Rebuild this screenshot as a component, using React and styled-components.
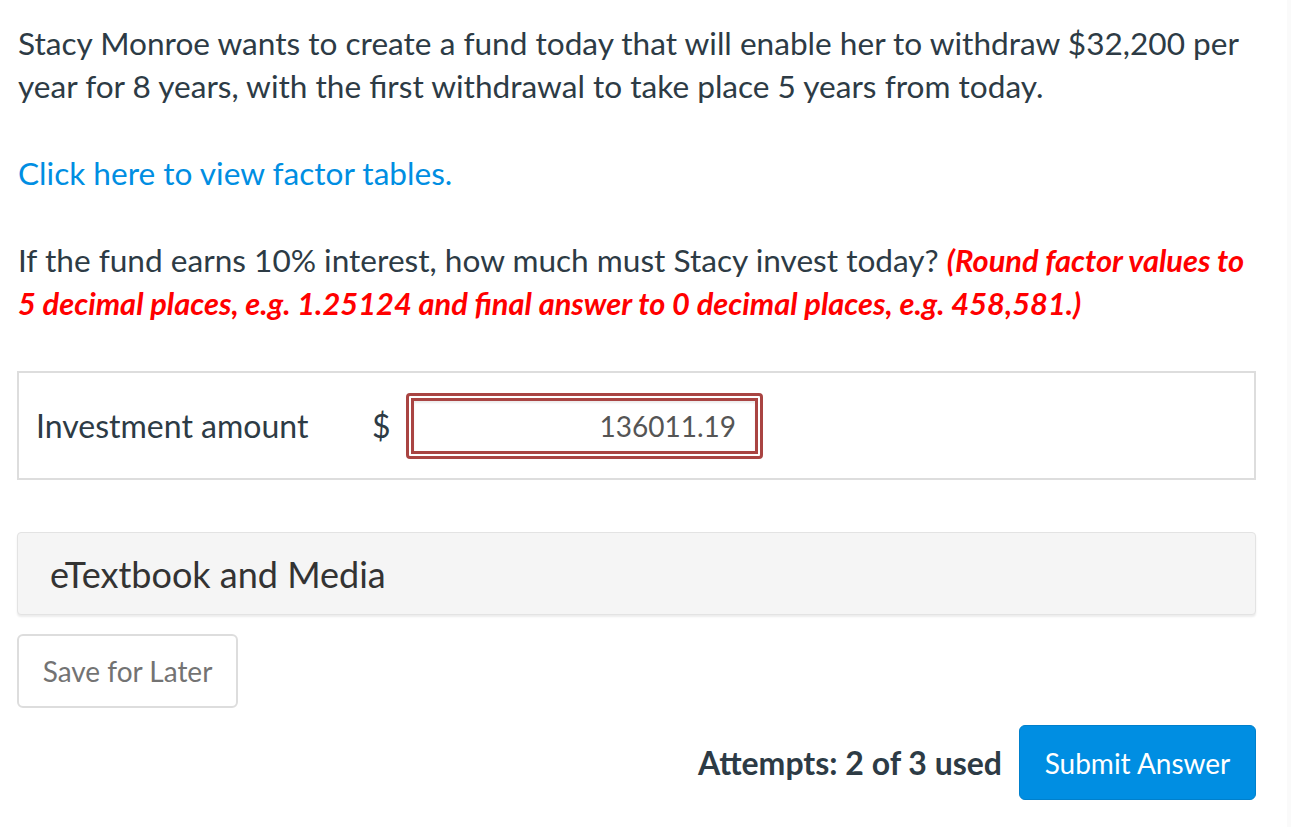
import React from "react";
import styled, { createGlobalStyle } from "styled-components";

const Global = createGlobalStyle`
  html, body { margin: 0; padding: 0; background: #fafafa; }
  body { font-family: Lato, "Open Sans", sans-serif; color: #2d3b45; }
`;

const Page = styled.div`
  width: 1287px;
  min-height: 827px;
  background: #ffffff;
  box-sizing: border-box;
  padding: 22px 31px 20px 17px;
`;

const Para = styled.p`
  margin: 0 -10px ${(p) => (p.$last ? 0 : 44)}px 1px;
  font-size: 31.6px;
  line-height: 43px;
`;

const Link = styled.a`
  color: #008ee2;
  text-decoration: none;
`;

const Note = styled.span`
  color: #ff0000;
  font-weight: 700;
  font-style: italic;
  font-size: 30.8px;
`;

const AnswerBox = styled.div`
  margin-top: 46px;
  border: 2px solid #dddddd;
  height: 109px;
  box-sizing: border-box;
  display: flex;
  align-items: center;
  padding: 0 0 0 17px;
`;

const Label = styled.span`
  font-size: 32px;
  width: 336px;
`;

const Currency = styled.span`
  font-size: 32px;
  width: 34px;
`;

const Field = styled.div`
  border: 3px solid #a94442;
  border-radius: 4px;
  padding: 2px;
  width: 357px;
  height: 66px;
  box-sizing: border-box;
  display: flex;
`;

const Input = styled.div`
  flex: 1;
  border: 3px solid #a94442;
  box-shadow: inset 0 2px 2px rgba(0, 0, 0, 0.08);
  display: flex;
  align-items: center;
  justify-content: flex-end;
  padding-right: 19px;
  font-size: 28px;
  color: #555555;
`;

const Panel = styled.div`
  margin-top: 52px;
  height: 83px;
  box-sizing: border-box;
  background: #f5f5f5;
  border: 1px solid #e3e3e3;
  border-radius: 4px;
  box-shadow: 0 2px 2px rgba(0, 0, 0, 0.08);
  display: flex;
  align-items: center;
  padding-left: 32px;
  font-size: 36px;
  color: #333333;
`;

const SecondaryButton = styled.button`
  margin-top: 19px;
  width: 221px;
  height: 74px;
  background: #ffffff;
  border: 2px solid #dddddd;
  border-radius: 6px;
  font-family: Lato, sans-serif;
  font-size: 28px;
  color: #737373;
  padding: 0;
  display: block;
`;

const Footer = styled.div`
  margin-top: 17px;
  display: flex;
  align-items: center;
  justify-content: flex-end;
  gap: 17px;
`;

const Attempts = styled.span`
  font-size: 32px;
  font-weight: 700;
`;

const PrimaryButton = styled.button`
  width: 237px;
  height: 75px;
  background: #008ee2;
  border: 1px solid #0080cc;
  border-radius: 6px;
  color: #ffffff;
  font-family: Lato, sans-serif;
  font-size: 28px;
  padding: 0;
`;

export default function App() {
  return (
    <>
      <Global />
      <Page>
        <Para>
          Stacy Monroe wants to create a fund today that will enable her to withdraw $32,200 per
          year for 8 years, with the first withdrawal to take place 5 years from today.
        </Para>
        <Para>
          <Link href="#">Click here to view factor tables.</Link>
        </Para>
        <Para $last>
          If the fund earns 10% interest, how much must Stacy invest today?{" "}
          <Note>
            (Round factor values to 5 decimal places, e.g. 1.25124 and final answer to 0 decimal
            places, e.g. 458,581.)
          </Note>
        </Para>
        <AnswerBox>
          <Label>Investment amount</Label>
          <Currency>$</Currency>
          <Field>
            <Input>136011.19</Input>
          </Field>
        </AnswerBox>
        <Panel>eTextbook and Media</Panel>
        <SecondaryButton>Save for Later</SecondaryButton>
        <Footer>
          <Attempts>Attempts: 2 of 3 used</Attempts>
          <PrimaryButton>Submit Answer</PrimaryButton>
        </Footer>
      </Page>
    </>
  );
}
